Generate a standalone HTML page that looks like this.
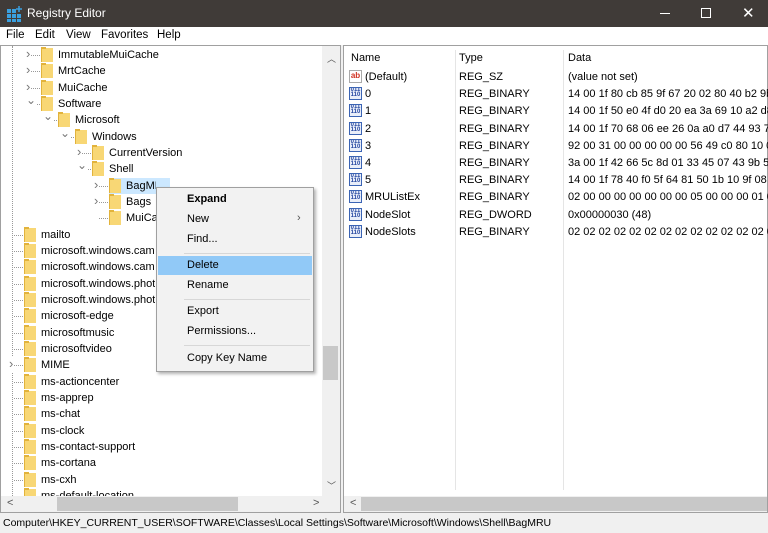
<!DOCTYPE html>
<html><head><style>
*{margin:0;padding:0;box-sizing:border-box}
body{width:768px;height:533px;overflow:hidden;background:#f0f0f0;font-family:"Liberation Sans",sans-serif;font-size:11px;color:#000;position:relative}
.abs{position:absolute}
.title{left:0;top:0;width:768px;height:27px;background:#403b38;color:#fff;font-size:12px}
.menu{left:0;top:27px;width:768px;height:18px;background:#fff}
.menu span{position:absolute;top:2px;font-size:11.5px}
.pane{background:#fff;border:1px solid #a0a0a0;overflow:hidden}
.row{position:absolute;height:16px;white-space:nowrap;font-size:11px;line-height:16px}
.fold{position:absolute;width:12px;height:14px;background:#f8d775;border-left:1px solid #e2b33c;top:1px}
.fold:before{content:"";position:absolute;left:-1px;top:-1px;width:5px;height:2px;background:#e2b33c}
.arr{position:absolute;color:#777;font-size:10px;top:0}
.dot{position:absolute;top:8px;height:1px;border-top:1px dotted #999}
.cm{left:156px;top:187px;width:158px;height:185px;background:#f2f2f2;border:1px solid #a0a0a0;box-shadow:2px 2px 3px rgba(0,0,0,.3)}
.cm div{position:absolute;left:30px;font-size:11px}
.sep{position:absolute;left:27px!important;width:126px;height:1px;background:#d7d7d7}
.lr{position:absolute;font-size:11px;line-height:16px;white-space:nowrap}
.ic{position:absolute;width:13px;height:13px;border:1px solid #3b64b4;background:#e9eef9;font-size:6px;color:#2648a0;line-height:5px;text-align:center;font-weight:bold;overflow:hidden}
</style></head><body>
<div class="abs title">
 <svg class="abs" style="left:7px;top:6px" width="16" height="16"><rect x="0" y="3" width="4" height="4" fill="#3aa0e0"/><rect x="5" y="3" width="4" height="4" fill="#3aa0e0"/><rect x="0" y="8" width="4" height="4" fill="#3aa0e0"/><rect x="5" y="8" width="4" height="4" fill="#3aa0e0"/><rect x="10" y="8" width="4" height="4" fill="#3aa0e0"/><rect x="0" y="13" width="4" height="3" fill="#3aa0e0"/><rect x="5" y="13" width="4" height="3" fill="#3aa0e0"/><rect x="10" y="13" width="4" height="3" fill="#3aa0e0"/><path d="M12 0v6M9 3h6" stroke="#3aa0e0" stroke-width="1.5"/></svg>
 <span class="abs" style="left:27px;top:6px">Registry Editor</span>
 <div class="abs" style="left:660px;top:13px;width:10px;height:1px;background:#fff"></div>
 <div class="abs" style="left:701px;top:8px;width:10px;height:10px;border:1px solid #fff"></div>
 <span class="abs" style="left:742px;top:4px;font-size:15px">✕</span>
</div>
<div class="abs menu"><span style="left:6px">File</span><span style="left:35px">Edit</span><span style="left:66px">View</span><span style="left:101px">Favorites</span><span style="left:157px">Help</span></div>
<div class="abs pane" style="left:0;top:45px;width:341px;height:468px">
<div class="abs" style="left:321px;top:0;width:18px;height:450px;background:#f0f0f0"><div class="abs" style="left:1px;top:300px;width:15px;height:34px;background:#c8c8c8"></div><span class="abs" style="left:5px;top:6px;color:#555;font-size:9px">︿</span><span class="abs" style="left:5px;top:433px;color:#555;font-size:9px">﹀</span></div>
<div class="abs" style="left:0;top:450px;width:339px;height:17px;background:#f0f0f0"><div class="abs" style="left:56px;top:1px;width:181px;height:14px;background:#c8c8c8"></div><span class="abs" style="left:6px;top:1px;color:#555">&lt;</span><span class="abs" style="left:312px;top:1px;color:#555">&gt;</span></div>
</div>
<div class="abs" style="left:12px;top:46px;width:0;height:450px;border-left:1px dotted #999"></div>
<div class="abs" style="left:109px;top:178px;width:61px;height:16px;background:#cce8ff"></div>
<div id="tree"></div>
<div class="abs pane" style="left:343px;top:45px;width:425px;height:468px">
<div class="abs" style="left:0;top:450px;width:425px;height:17px;background:#f0f0f0"><div class="abs" style="left:17px;top:1px;width:420px;height:14px;background:#c8c8c8"></div><span class="abs" style="left:6px;top:1px;color:#555">&lt;</span></div>
<div class="abs" style="left:111px;top:4px;width:1px;height:440px;background:#e5e5e5"></div>
<div class="abs" style="left:219px;top:4px;width:1px;height:440px;background:#e5e5e5"></div>
</div>
<div class="abs" style="left:0;top:513px;width:768px;height:20px;background:#f0f0f0;font-size:10.5px;padding:4px 0 0 3px;white-space:nowrap">Computer\HKEY_CURRENT_USER\SOFTWARE\Classes\Local Settings\Software\Microsoft\Windows\Shell\BagMRU</div>
<div id="list"></div>
<div class="abs cm">
 <div style="top:5px;font-weight:bold">Expand</div>
 <div style="top:25px">New</div><span class="abs" style="left:140px;top:24px;color:#555">›</span>
 <div style="top:45px">Find...</div>
 <div class="sep" style="top:65px"></div>
 <div style="left:1px!important;top:68px;width:154px;height:19px;background:#91c9f7"></div>
 <div style="top:71px">Delete</div>
 <div style="top:91px">Rename</div>
 <div class="sep" style="top:111px"></div>
 <div style="top:117px">Export</div>
 <div style="top:137px">Permissions...</div>
 <div class="sep" style="top:157px"></div>
 <div style="top:164px">Copy Key Name</div>
</div>
<script>
var T=[[1,'ImmutableMuiCache','>'],[1,'MrtCache','>'],[1,'MuiCache','>'],[1,'Software','v'],[2,'Microsoft','v'],[3,'Windows','v'],[4,'CurrentVersion','>'],[4,'Shell','v'],[5,'BagMRU','>'],[5,'Bags','>'],[5,'MuiCache',''],
[0,'mailto',''],[0,'microsoft.windows.camera',''],[0,'microsoft.windows.camera.picker',''],[0,'microsoft.windows.photos.crop',''],[0,'microsoft.windows.photos.picker',''],[0,'microsoft-edge',''],[0,'microsoftmusic',''],[0,'microsoftvideo',''],[0,'MIME','>'],[0,'ms-actioncenter',''],[0,'ms-apprep',''],[0,'ms-chat',''],[0,'ms-clock',''],[0,'ms-contact-support',''],[0,'ms-cortana',''],[0,'ms-cxh',''],[0,'ms-default-location','']];
var h='';
T.forEach(function(t,i){var y=47+i*16.33;if(y>494)return;var fx=24+t[0]*17;var clip=y>180&&y<372?'max-width:'+(155-fx-17)+'px;overflow:hidden;':'';
if(i>=8&&i<=10)clip='max-width:'+(156-fx-17)+'px;overflow:hidden;';
var ch=t[2]=='>'?'›':t[2]=='v'?'⌄':'';
h+='<div class="row" style="left:0;top:'+y+'px;width:320px;height:'+(y>478?496-y:16)+'px;overflow:hidden"><div class="dot" style="left:'+(fx-10)+'px;width:9px"></div>'+(ch?'<span class="arr" style="background:#fff;left:'+(fx-15)+'px;'+(t[2]=='v'?'top:-4px;font-size:12px':'font-size:13px;top:-1px')+'">'+ch+'</span>':'')+'<div class="fold" style="left:'+fx+'px"></div><span style="position:absolute;left:'+(fx+17)+'px;'+clip+'">'+t[1]+'</span></div>';});
document.getElementById('tree').innerHTML=h;
var L=[['(Default)','REG_SZ','(value not set)'],['0','REG_BINARY','14 00 1f 80 cb 85 9f 67 20 02 80 40 b2 9b 55'],['1','REG_BINARY','14 00 1f 50 e0 4f d0 20 ea 3a 69 10 a2 d8 08'],['2','REG_BINARY','14 00 1f 70 68 06 ee 26 0a a0 d7 44 93 71 be'],['3','REG_BINARY','92 00 31 00 00 00 00 00 56 49 c0 80 10 00 4c'],['4','REG_BINARY','3a 00 1f 42 66 5c 8d 01 33 45 07 43 9b 53 22'],['5','REG_BINARY','14 00 1f 78 40 f0 5f 64 81 50 1b 10 9f 08 00'],['MRUListEx','REG_BINARY','02 00 00 00 00 00 00 00 05 00 00 00 01 00 00'],['NodeSlot','REG_DWORD','0x00000030 (48)'],['NodeSlots','REG_BINARY','02 02 02 02 02 02 02 02 02 02 02 02 02 02 02']];
var g='<div class="lr" style="left:351px;top:50px">Name</div><div class="lr" style="left:459px;top:50px">Type</div><div class="lr" style="left:568px;top:50px">Data</div>';
L.forEach(function(r,i){var y=69+i*17.2;
g+=(i==0?'<div class="ic" style="left:349px;top:'+(y+1)+'px;border-color:#aaa;background:#fff;color:#d03020;font-size:8px;line-height:10px">ab</div>':'<div class="ic" style="left:349px;top:'+(y+1)+'px">011<br>110</div>')+'<div class="lr" style="left:365px;top:'+y+'px">'+r[0]+'</div><div class="lr" style="left:459px;top:'+y+'px">'+r[1]+'</div><div class="lr" style="left:568px;top:'+y+'px;width:200px;overflow:hidden">'+r[2]+'</div>';});
document.getElementById('list').innerHTML=g;
</script>
</body></html>
